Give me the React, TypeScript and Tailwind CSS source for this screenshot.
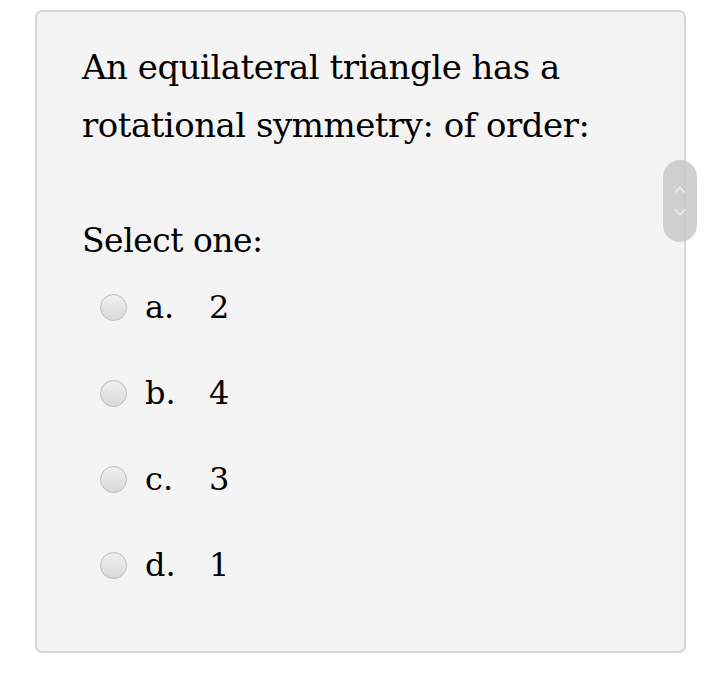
export default function App() {
  const options = [
    { letter: "a.", value: "2" },
    { letter: "b.", value: "4" },
    { letter: "c.", value: "3" },
    { letter: "d.", value: "1" },
  ];

  return (
    <div className="relative w-[720px] h-[677px] bg-white pt-[10px] pl-[35px] font-['DejaVu_Serif',serif] text-black">
      <div className="w-[651px] h-[643px] bg-[#f4f4f4] border-2 border-[#d6d6d6] rounded-[7px] pl-[45px] pt-[26px]">
        <p className="text-[34px] leading-[58px] tracking-[-0.5px]">
          An equilateral triangle has a
          <br />
          rotational symmetry: of order:
        </p>
        <p className="mt-[67px] text-[33px] leading-[40px] tracking-[-0.5px]">Select one:</p>
        <div className="mt-[26px] flex flex-col gap-[46px] pl-[18px]">
          {options.map((o) => (
            <label key={o.letter} className="flex items-center h-[40px] text-[32px]">
              <span className="w-[27px] h-[27px] rounded-full border border-[#b9b9b9] bg-gradient-to-b from-[#f0f0f0] to-[#d9d9d9] shrink-0" />
              <span className="ml-[18px] w-[64px]">{o.letter}</span>
              <span>{o.value}</span>
            </label>
          ))}
        </div>
      </div>

      <div className="absolute left-[663px] top-[160px] w-[34px] h-[82px] rounded-full bg-[#c6c6c6]/80 flex flex-col items-center justify-center gap-[14px]">
        <svg width="12" height="8" viewBox="0 0 12 8" fill="none" stroke="#eeeeee" strokeWidth="1.6">
          <path d="M1 6.5 L6 1.5 L11 6.5" />
        </svg>
        <svg width="12" height="8" viewBox="0 0 12 8" fill="none" stroke="#eeeeee" strokeWidth="1.6">
          <path d="M1 1.5 L6 6.5 L11 1.5" />
        </svg>
      </div>
    </div>
  );
}
